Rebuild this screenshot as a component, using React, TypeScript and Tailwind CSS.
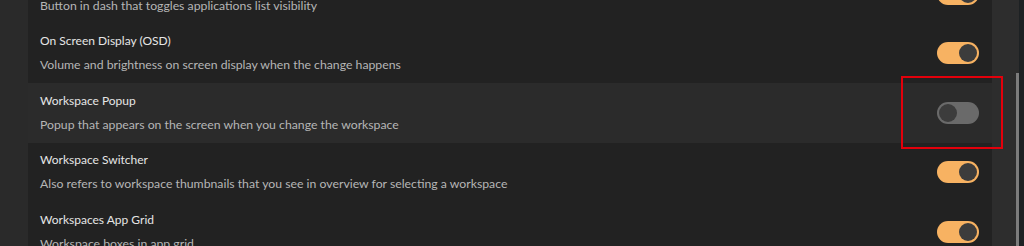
const rows = [
  {
    title: "Show Apps Button",
    desc: "Button in dash that toggles applications list visibility",
    on: true,
  },
  {
    title: "On Screen Display (OSD)",
    desc: "Volume and brightness on screen display when the change happens",
    on: true,
  },
  {
    title: "Workspace Popup",
    desc: "Popup that appears on the screen when you change the workspace",
    on: false,
    hover: true,
  },
  {
    title: "Workspace Switcher",
    desc: "Also refers to workspace thumbnails that you see in overview for selecting a workspace",
    on: true,
  },
  {
    title: "Workspaces App Grid",
    desc: "Workspace boxes in app grid",
    on: true,
  },
];

function Toggle({ on }: { on: boolean }) {
  return (
    <div
      className={
        on
          ? "flex h-[22px] w-[42px] items-center justify-end rounded-full bg-[#f7b262] px-[2px]"
          : "flex h-[22px] w-[42px] items-center justify-start rounded-full bg-[#6a6a6a] px-[2px]"
      }
    >
      <div className="h-[18px] w-[18px] rounded-full bg-[#3c3c3c]" />
    </div>
  );
}

export default function App() {
  return (
    <div
      className="relative flex h-[246px] w-[1024px] overflow-hidden bg-[#2a2a2a]"
      style={{ fontFamily: 'Lato, "Noto Sans", sans-serif' }}
    >
      <div className="w-[28px] shrink-0 bg-[#2a2a2a]" />

      <div className="w-[964px] shrink-0 bg-[#222222]">
        <div className="-mt-[36px] flex flex-col">
          {rows.map((row) => (
            <div
              key={row.title}
              className={
                row.hover
                  ? "flex h-[59.5px] items-center justify-between bg-[#2b2b2b] pl-[12px] pr-[13px]"
                  : "flex h-[59.5px] items-center justify-between pl-[12px] pr-[13px]"
              }
            >
              <div className="flex flex-col">
                <span className="text-[12px] leading-[18px] text-[#e6e6e6]">{row.title}</span>
                <span className="mt-[6px] text-[12.25px] leading-[18px] text-[#b6b6b6]">
                  {row.desc}
                </span>
              </div>
              <Toggle on={row.on} />
            </div>
          ))}
        </div>
      </div>

      <div className="w-[24px] shrink-0 bg-[#2d2d2d]" />
      <div className="flex w-[3px] shrink-0 flex-col bg-[#2d2d2d]">
        <div className="mt-[73px] flex-1 bg-[#7c7c7c]" />
      </div>
      <div className="w-[5px] shrink-0 bg-[#1d2123]" />

      {/* highlight box */}
      <div className="absolute left-[901px] top-[76px] h-[73px] w-[102px] border-2 border-[#e3000b]" />
    </div>
  );
}
